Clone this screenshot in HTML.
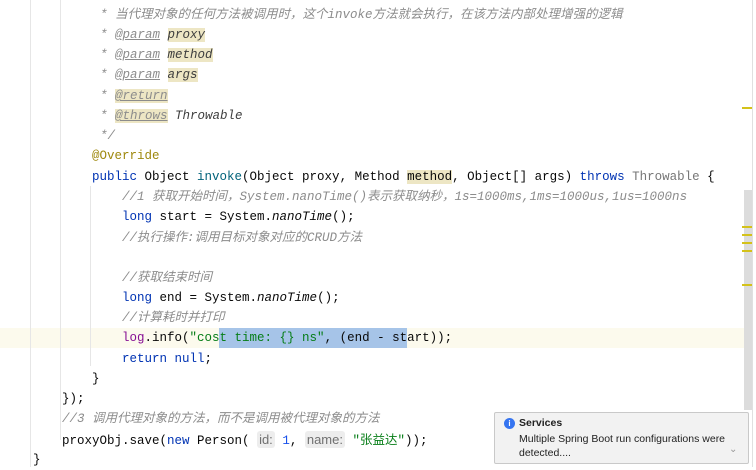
<!DOCTYPE html>
<html><head><meta charset="utf-8"><style>
body{margin:0;width:756px;height:467px;overflow:hidden;background:#fff;position:relative;font-family:"Liberation Mono","Noto Sans CJK SC",monospace;font-size:12.5px;color:#080808}
.l{position:absolute;height:20px;line-height:20px;white-space:pre}
.c{color:#8c8c8c;font-style:italic}
.k{color:#0033b3}
.t{color:#8c8c8c;text-decoration:underline;font-style:italic}
.h{background:#ede6c4}
.m{color:#00627a}
.s{color:#067d17}
.n{color:#1750eb}
.p{color:#871094}
.i{font-style:italic}
.a{color:#9e880d}
.g{position:absolute;width:1px;background:#e6e6e6}
.hint{background:#ededed;color:#707070;font-family:"Liberation Sans",sans-serif;font-size:13px;border-radius:3px;padding:1px 2px}
</style></head><body>
<div style="position:absolute;left:0;top:328px;width:744px;height:20px;background:#fcfaed"></div>
<div style="position:absolute;left:219px;top:328px;width:188px;height:20px;background:#a6c4e8"></div>
<div class="g" style="left:30px;top:0;height:467px"></div>
<div class="g" style="left:60px;top:0;height:440px"></div>
<div class="g" style="left:90px;top:186px;height:180px"></div>

<div class="l c" style="left:100px;top:5px">* 当代理对象的任何方法被调用时，这个invoke方法就会执行，在该方法内部处理增强的逻辑</div>
<div class="l c" style="left:100px;top:25px">* <span class="t">@param</span> <span class="h" style="color:#3d3d3d">proxy</span></div>
<div class="l c" style="left:100px;top:45px">* <span class="t">@param</span> <span class="h" style="color:#3d3d3d">method</span></div>
<div class="l c" style="left:100px;top:65px">* <span class="t">@param</span> <span class="h" style="color:#3d3d3d">args</span></div>
<div class="l c" style="left:100px;top:86px">* <span class="t h">@return</span></div>
<div class="l c" style="left:100px;top:106px">* <span class="t h">@throws</span> <span style="color:#3d3d3d">Throwable</span></div>
<div class="l c" style="left:100px;top:126px">*/</div>
<div class="l a" style="left:92px;top:146px">@Override</div>
<div class="l" style="left:92px;top:167px"><span class="k">public</span> Object <span class="m">invoke</span>(Object proxy, Method <span class="h">method</span>, Object[] args) <span class="k">throws</span> <span style="color:#777">Throwable</span> {</div>
<div class="l c" style="left:122px;top:187px">//1 获取开始时间，System.nanoTime()表示获取纳秒，1s=1000ms,1ms=1000us,1us=1000ns</div>
<div class="l" style="left:122px;top:207px"><span class="k">long</span> start = System.<span class="i">nanoTime</span>();</div>
<div class="l c" style="left:122px;top:228px">//执行操作:调用目标对象对应的CRUD方法</div>
<div class="l c" style="left:122px;top:268px">//获取结束时间</div>
<div class="l" style="left:122px;top:288px"><span class="k">long</span> end = System.<span class="i">nanoTime</span>();</div>
<div class="l c" style="left:122px;top:308px">//计算耗时并打印</div>
<div class="l" style="left:122px;top:328px"><span class="p">log</span>.info(<span class="s">"cost time: {} ns"</span>, (end - start));</div>
<div class="l" style="left:122px;top:349px"><span class="k">return null</span>;</div>
<div class="l" style="left:92px;top:369px">}</div>
<div class="l" style="left:62px;top:389px">});</div>
<div class="l c" style="left:62px;top:409px">//3 调用代理对象的方法，而不是调用被代理对象的方法</div>
<div class="l" style="left:62px;top:430px">proxyObj.save(<span class="k">new</span> Person( <span class="hint">id:</span> <span class="n">1</span>, <span class="hint">name:</span> <span class="s">"张益达"</span>));</div>
<div class="l" style="left:33px;top:450px">}</div>

<div style="position:absolute;left:752px;top:0;width:1px;height:467px;background:#e0e0e0"></div>
<div style="position:absolute;left:744px;top:190px;width:8px;height:220px;background:#dcdcdc"></div>
<div style="position:absolute;left:742px;top:107px;width:10px;height:2px;background:#d4c21a"></div>
<div style="position:absolute;left:742px;top:226px;width:10px;height:2px;background:#d4c21a"></div>
<div style="position:absolute;left:742px;top:234px;width:10px;height:2px;background:#d4c21a"></div>
<div style="position:absolute;left:742px;top:242px;width:10px;height:2px;background:#d4c21a"></div>
<div style="position:absolute;left:742px;top:250px;width:10px;height:2px;background:#d4c21a"></div>
<div style="position:absolute;left:742px;top:284px;width:10px;height:2px;background:#d4c21a"></div>

<div style="position:absolute;left:494px;top:412px;width:253px;height:50px;background:#f2f2f2;border:1px solid #c9c9c9;border-radius:2px;font-family:'Liberation Sans',sans-serif;font-size:10.5px;color:#222">
<div style="position:absolute;left:9px;top:5px;width:11px;height:11px;border-radius:50%;background:#3574f0;color:#fff;font-size:8px;line-height:11px;text-align:center;font-weight:bold">i</div>
<div style="position:absolute;left:24px;top:4px;font-weight:bold">Services</div>
<div style="position:absolute;left:24px;top:19px;line-height:14px;width:215px">Multiple Spring Boot run configurations were detected....</div>
<div style="position:absolute;left:234px;top:31px;color:#999;font-size:10px">⌄</div>
</div>
</body></html>
